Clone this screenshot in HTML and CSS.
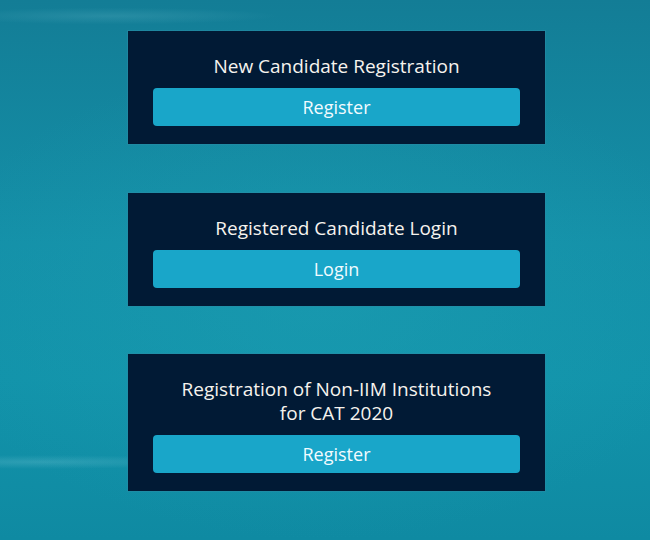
FILE: index.html
```html
<!DOCTYPE html>
<html lang="en">
<head>
<meta charset="utf-8">
<title>CAT 2020</title>
<link rel="stylesheet" href="styles.css">
</head>
<body>
<main class="panel-stack">
  <section class="panel">
    <h2 class="panel-title">New Candidate Registration</h2>
    <a class="panel-btn" href="#">Register</a>
  </section>
  <section class="panel">
    <h2 class="panel-title">Registered Candidate Login</h2>
    <a class="panel-btn" href="#">Login</a>
  </section>
  <section class="panel panel-last">
    <h2 class="panel-title">Registration of Non-IIM Institutions<br>for CAT 2020</h2>
    <a class="panel-btn" href="#">Register</a>
  </section>
</main>
</body>
</html>
```
FILE: styles.css
```css
html, body {
  margin: 0;
  height: 100%;
}

body {
  font-family: "Open Sans", "Noto Sans", sans-serif;
  background:
    radial-gradient(ellipse 260px 10px at 40px 462px, rgba(120, 200, 215, 0.28), transparent 70%),
    radial-gradient(ellipse 240px 12px at 110px 16px, rgba(110, 190, 205, 0.22), transparent 70%),
    radial-gradient(ellipse 500px 300px at 320px 300px, rgba(30, 160, 180, 0.45), transparent 80%),
    linear-gradient(180deg, #137d96 0%, #1490a8 45%, #1293aa 70%, #0f8aa2 100%);
  overflow: hidden;
}

.panel-stack {
  display: flex;
  flex-direction: column;
  gap: 49px;
  width: 417px;
  margin-left: 128px;
  padding-top: 31px;
}

.panel {
  background: #011a35;
  box-shadow: 0 0 0 1px rgba(40, 140, 165, 0.55);
  padding: 23px 25px 18px;
  display: flex;
  flex-direction: column;
  gap: 10px;
}

.panel-last {
  margin-top: -1px;
}

.panel-title {
  margin: 0;
  font-size: 19px;
  font-weight: 400;
  line-height: 24px;
  color: #f6f3ee;
  text-align: center;
}

.panel-btn {
  display: block;
  height: 38px;
  line-height: 38px;
  border-radius: 4px;
  background: #19a6c9;
  color: #f2fbff;
  text-align: center;
  text-decoration: none;
  font-size: 18px;
}
```
